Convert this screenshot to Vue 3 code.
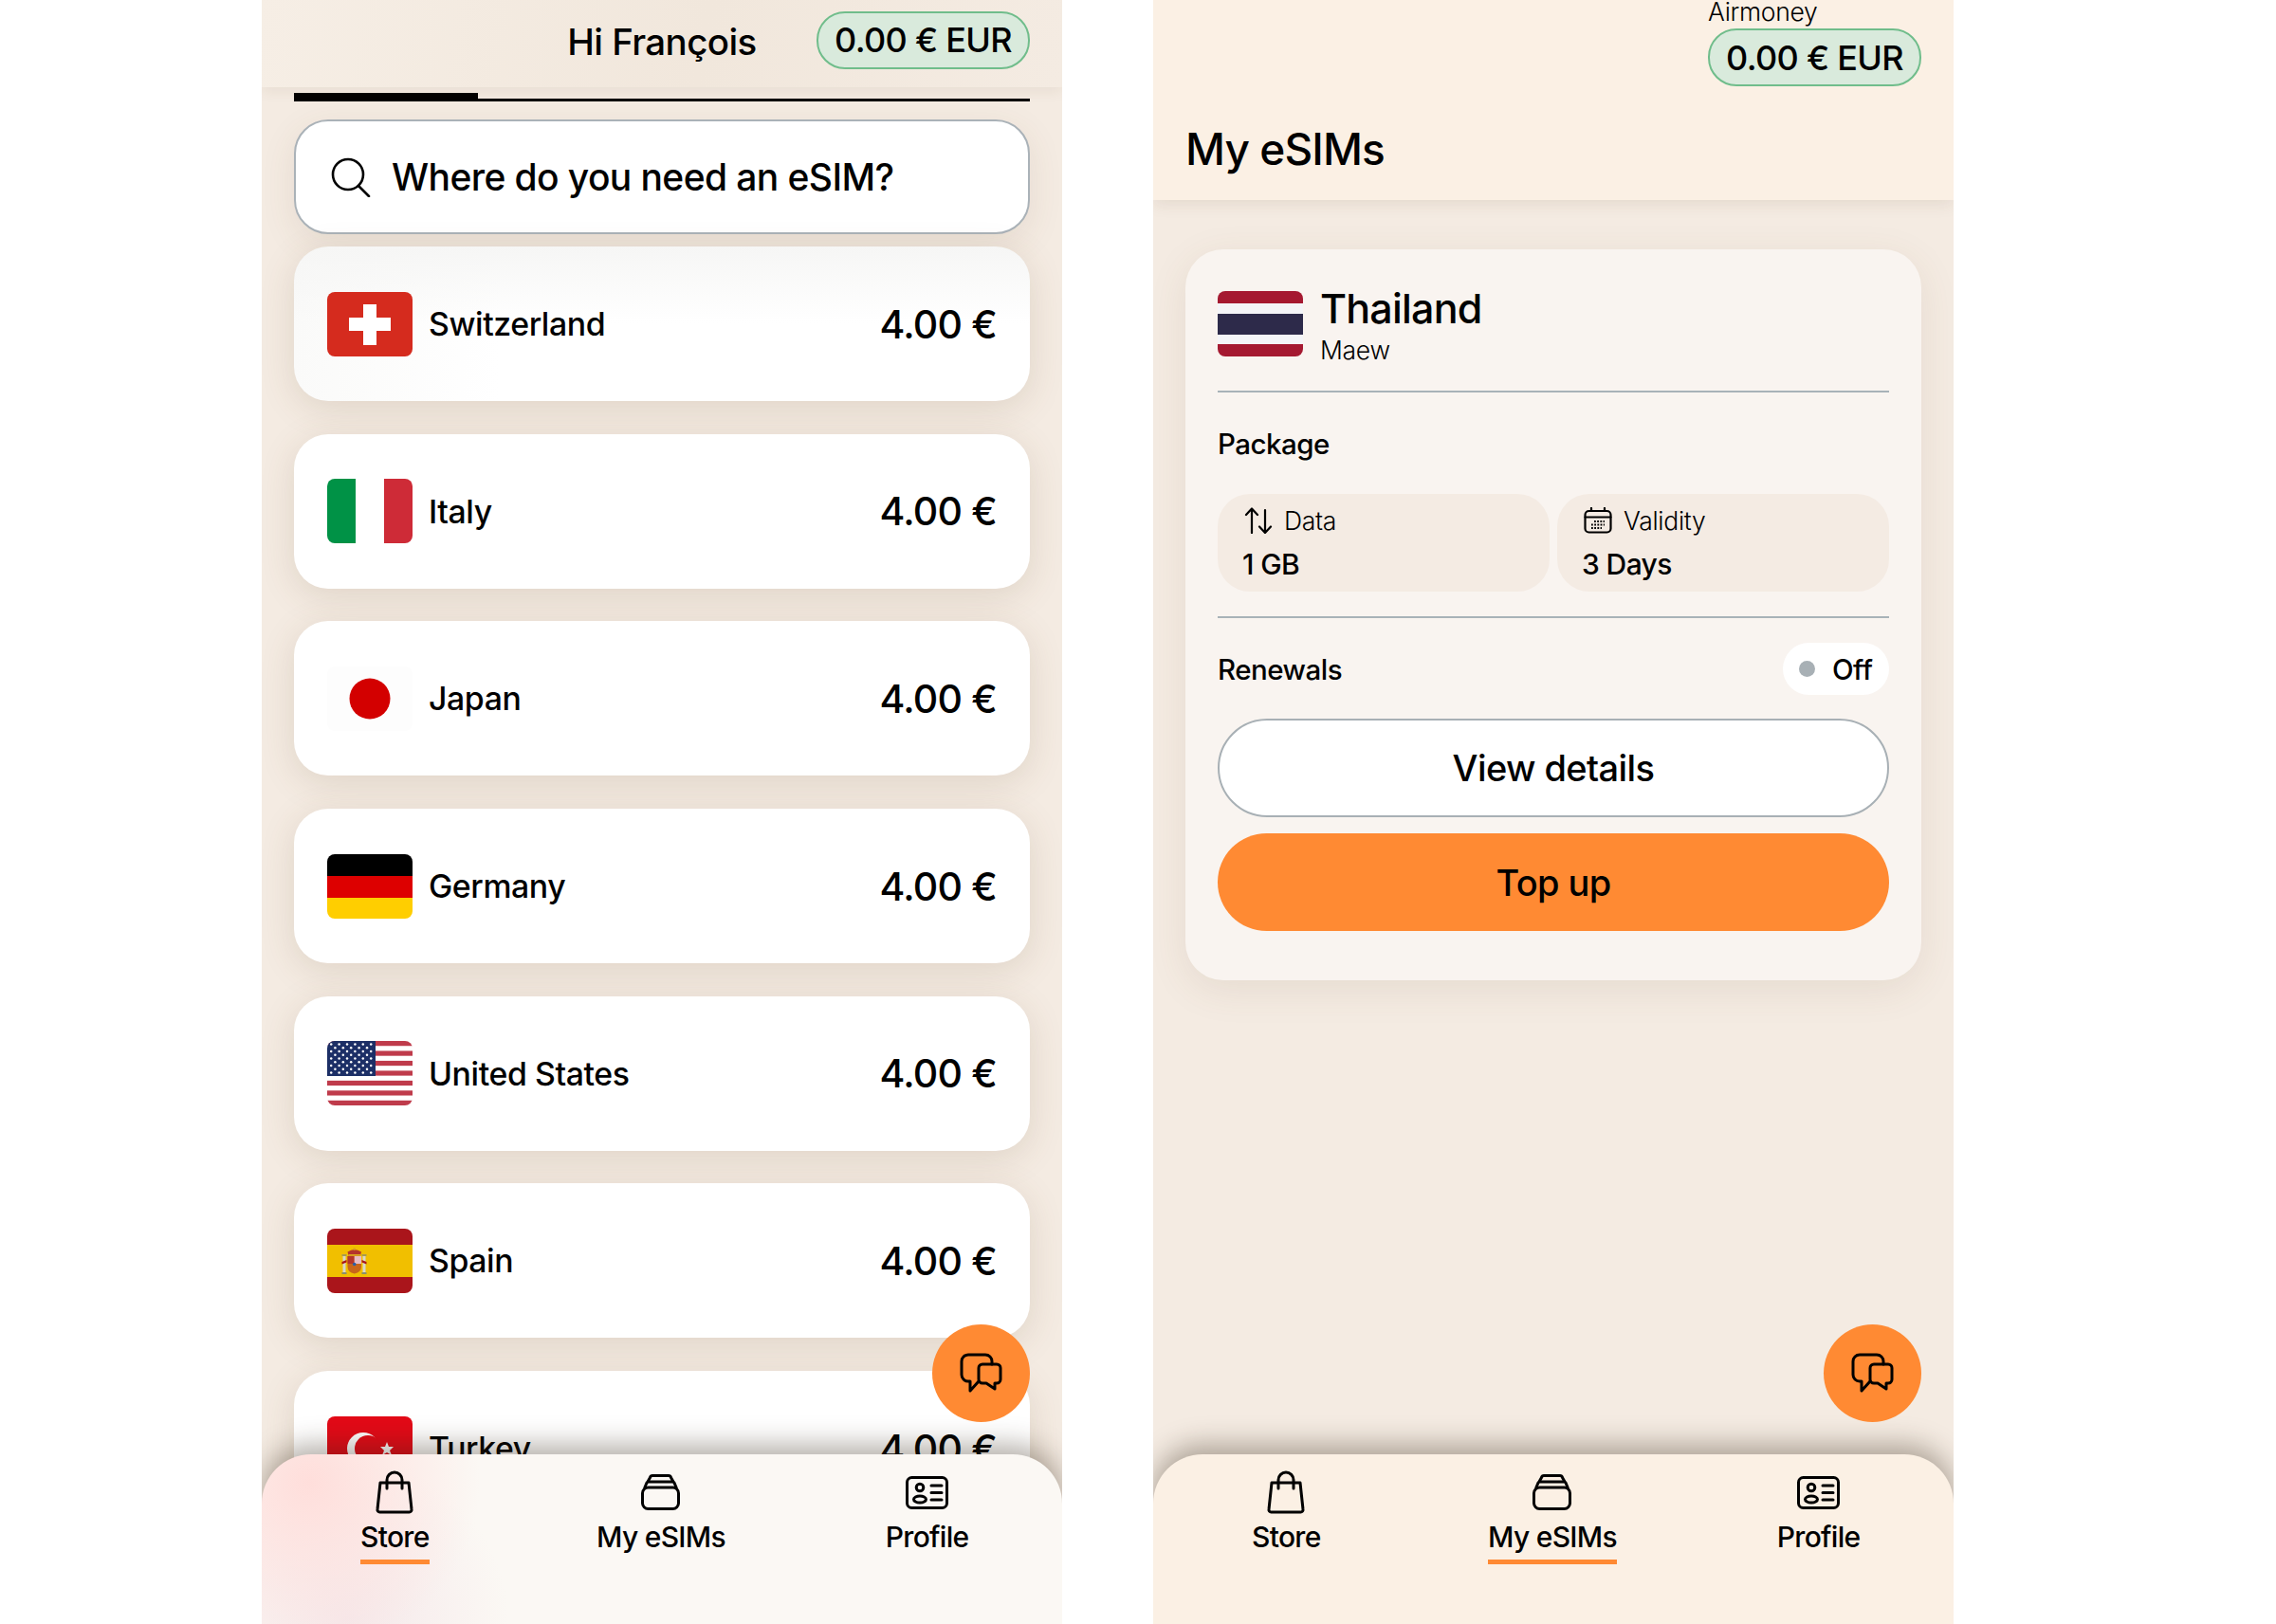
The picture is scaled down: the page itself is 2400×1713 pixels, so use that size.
<script setup>
const countries = [
  { name: 'Switzerland', flag: 'ch' },
  { name: 'Italy', flag: 'it' },
  { name: 'Japan', flag: 'jp' },
  { name: 'Germany', flag: 'de' },
  { name: 'United States', flag: 'us' },
  { name: 'Spain', flag: 'es' },
  { name: 'Turkey', flag: 'tr' },
]
const stripes = [0, 2, 4, 6, 8, 10, 12].map((i) => (i * 68) / 13)
const stars = []
for (let r = 0; r < 9; r++) {
  const n = r % 2 === 0 ? 6 : 5
  for (let c = 0; c < n; c++) {
    stars.push({ x: (r % 2 === 0 ? 4.2 : 8.4) + c * 8.4, y: 3.5 + r * 3.75 })
  }
}
const navs = ['Store', 'My eSIMs', 'Profile']
</script>

<template>
  <div class="page">
    <!-- Store screen -->
    <section class="screen store">
      <header class="hello">
        <h1 class="hi">Hi François</h1>
        <div class="pill hello-pill">0.00 € EUR</div>
      </header>
      <div class="tabs"><div class="tab-on"></div></div>
      <div class="search">
        <svg class="search-ic" viewBox="0 0 42 42" fill="none" stroke="#000" stroke-width="2.6" stroke-linecap="round">
          <circle cx="18" cy="18" r="16" />
          <path d="M29 30 L40 41" />
        </svg>
        <span>Where do you need an eSIM?</span>
      </div>
      <div class="list">
        <div v-for="(c, i) in countries" :key="c.name" class="row" :class="{ first: i === 0 }">
          <svg class="flag" viewBox="0 0 90 68">
            <template v-if="c.flag === 'ch'">
              <rect width="90" height="68" fill="#d52b1e" />
              <path d="M38 13 H52 V27 H67 V41 H52 V56 H38 V41 H23 V27 H38 Z" fill="#fff" />
            </template>
            <template v-else-if="c.flag === 'it'">
              <rect width="30" height="68" fill="#009246" />
              <rect x="30" width="30" height="68" fill="#fff" />
              <rect x="60" width="30" height="68" fill="#ce2b37" />
            </template>
            <template v-else-if="c.flag === 'jp'">
              <rect width="90" height="68" fill="#fdfdfd" />
              <circle cx="45" cy="34" r="21.5" fill="#d30000" />
            </template>
            <template v-else-if="c.flag === 'de'">
              <rect width="90" height="23" fill="#000" />
              <rect y="23" width="90" height="23" fill="#dd0000" />
              <rect y="46" width="90" height="22" fill="#ffce00" />
            </template>
            <template v-else-if="c.flag === 'us'">
              <rect width="90" height="68" fill="#fff" />
              <rect v-for="y in stripes" :key="y" :y="y" width="90" height="5.23" fill="#bf3b4b" />
              <rect width="51" height="37" fill="#1c2f66" />
              <circle v-for="(s, k) in stars" :key="k" :cx="s.x" :cy="s.y" r="1.25" fill="#fff" />
            </template>
            <template v-else-if="c.flag === 'es'">
              <rect width="90" height="68" fill="#aa151b" />
              <rect y="17" width="90" height="34" fill="#f1bf00" />
              <rect x="16.5" y="29" width="3" height="17" fill="#d8d8cc" />
              <rect x="37.5" y="29" width="3" height="17" fill="#d8d8cc" />
              <rect x="15.5" y="46" width="5" height="2" fill="#8a8f6a" />
              <rect x="36.5" y="46" width="5" height="2" fill="#8a8f6a" />
              <rect x="15.5" y="27" width="5" height="2" fill="#a89a50" />
              <rect x="36.5" y="27" width="5" height="2" fill="#a89a50" />
              <path d="M15.5 35 L20.5 33 V35.5 L15.5 37.5 Z M41.5 35 L36.5 33 V35.5 L41.5 37.5 Z" fill="#aa151b" />
              <path d="M21.5 29 H36 V40 Q36 46 28.7 47.5 Q21.5 46 21.5 40 Z" fill="#c8661b" />
              <rect x="21.5" y="29" width="7.2" height="8" fill="#b5352a" />
              <rect x="28.7" y="29" width="7.3" height="8" fill="#e8bcc4" />
              <circle cx="28.7" cy="37.5" r="1.8" fill="#2b5fa8" />
              <path d="M22.5 28.5 L21.5 24.5 Q25 22 28.7 22 Q32.5 22 36 24.5 L35 28.5 Z" fill="#b5352a" />
              <path d="M22.5 27 H35 V28.8 H22.5 Z" fill="#d9a520" />
              <circle cx="28.7" cy="21.5" r="1.3" fill="#d9a520" />
            </template>
            <template v-else-if="c.flag === 'tr'">
              <rect width="90" height="68" fill="#e30a17" />
              <circle cx="38" cy="34" r="17" fill="#fff" />
              <circle cx="43" cy="34" r="14" fill="#e30a17" />
              <path d="M63 27 L65 32 L70 32 L66 36 L68 41 L63 38 L58 41 L60 36 L56 32 L61 32 Z" fill="#fff" />
            </template>
          </svg>
          <span class="name">{{ c.name }}</span>
          <span class="price">4.00 €</span>
        </div>
      </div>
      <button class="fab" type="button" aria-label="Chat">
        <svg viewBox="0 0 46 42" fill="none" stroke="#000" stroke-width="3" stroke-linejoin="round" stroke-linecap="round">
          <path d="M34 12 V9 a7 7 0 0 0 -7 -7 H9 a7 7 0 0 0 -7 7 v14 a7 7 0 0 0 7 7 h2 v10 l9 -10" />
          <path d="M24 12 h15 a4 4 0 0 1 4 4 v12 a4 4 0 0 1 -4 4 h-2 v6 l-9 -6 h-4 a4 4 0 0 1 -4 -4 v-12 a4 4 0 0 1 4 -4z" />
        </svg>
      </button>
      <nav class="nav nav-store">
        <div v-for="(n, i) in navs" :key="n" class="nav-item">
          <div class="nav-ic">
            <svg v-if="i === 0" class="ic-bag" viewBox="0 0 40 46" fill="none" stroke="#000" stroke-width="3" stroke-linecap="round" stroke-linejoin="round">
              <path d="M5 13 H35 L38 41 a2.5 2.5 0 0 1 -2.5 3 H4.5 a2.5 2.5 0 0 1 -2.5 -3 Z" />
              <path d="M12 19 V10 a8 8 0 0 1 16 0 V19" />
            </svg>
            <svg v-else-if="i === 1" class="ic-sim" viewBox="0 0 41 38" fill="none" stroke="#000" stroke-width="3" stroke-linejoin="round">
              <rect x="1.5" y="14" width="38" height="22.5" rx="6" />
              <path d="M3.5 15 L6 9 Q6.5 8 8 8 H33 Q34.5 8 35 9 L37.5 15" />
              <path d="M7 8 L9.5 3.5 Q10 1.5 12 1.5 H29 Q31 1.5 31.5 3.5 L34 8" />
            </svg>
            <svg v-else class="ic-id" viewBox="0 0 45 35" fill="none" stroke="#000" stroke-width="3" stroke-linecap="round">
              <rect x="1.5" y="1.5" width="42" height="32" rx="5" />
              <circle cx="15" cy="12" r="3.8" />
              <ellipse cx="15" cy="24.5" rx="6.5" ry="3.6" />
              <path d="M27 10 H38 M27 17.5 H38 M27 25 H38" />
            </svg>
          </div>
          <span class="nav-label" :class="{ active: i === 0 }">{{ n }}</span>
        </div>
      </nav>
    </section>

    <!-- My eSIMs screen -->
    <section class="screen esims">
      <header class="top">
        <div class="wallet">
          <div class="wallet-name">Airmoney</div>
          <div class="pill">0.00 € EUR</div>
        </div>
        <h1 class="title">My eSIMs</h1>
      </header>
      <article class="card">
        <div class="card-head">
          <svg class="flag" viewBox="0 0 90 69">
            <rect width="90" height="69" fill="#a51931" />
            <rect y="13" width="90" height="43" fill="#f4f5f8" />
            <rect y="24" width="90" height="22" fill="#2d2a4a" />
          </svg>
          <div class="head-text">
            <div class="country">Thailand</div>
            <div class="carrier">Maew</div>
          </div>
        </div>
        <div class="rule"></div>
        <div class="section">Package</div>
        <div class="boxes">
          <div class="box">
            <div class="box-top">
              <svg class="box-ic" viewBox="0 0 30 28" fill="none" stroke="#000" stroke-width="2.2" stroke-linecap="round" stroke-linejoin="round">
                <path d="M8 27 V2 M2 8 L8 1.5 L14 8" />
                <path d="M22 3 V26.5 M16 20.5 L22 27 L28 20.5" />
              </svg>
              <span>Data</span>
            </div>
            <div class="box-val">1 GB</div>
          </div>
          <div class="box">
            <div class="box-top">
              <svg class="box-ic" viewBox="0 0 30 28" fill="none" stroke="#000" stroke-width="2.2" stroke-linecap="round">
                <rect x="1.5" y="4" width="27" height="22.5" rx="4" />
                <path d="M1.5 10.5 H28.5 M8 1 V4 M22 1 V4" />
                <path d="M11 15 H22 M8 18.5 H22 M8 22 H19" stroke-width="1.8" stroke-dasharray="1.8 1.4" stroke-linecap="butt" />
              </svg>
              <span>Validity</span>
            </div>
            <div class="box-val">3 Days</div>
          </div>
        </div>
        <div class="rule rule-two"></div>
        <div class="renew">
          <span class="section-inline">Renewals</span>
          <div class="toggle"><i class="dot"></i><span>Off</span></div>
        </div>
        <button class="btn btn-out" type="button">View details</button>
        <button class="btn btn-fill" type="button">Top up</button>
      </article>
      <button class="fab" type="button" aria-label="Chat">
        <svg viewBox="0 0 46 42" fill="none" stroke="#000" stroke-width="3" stroke-linejoin="round" stroke-linecap="round">
          <path d="M34 12 V9 a7 7 0 0 0 -7 -7 H9 a7 7 0 0 0 -7 7 v14 a7 7 0 0 0 7 7 h2 v10 l9 -10" />
          <path d="M24 12 h15 a4 4 0 0 1 4 4 v12 a4 4 0 0 1 -4 4 h-2 v6 l-9 -6 h-4 a4 4 0 0 1 -4 -4 v-12 a4 4 0 0 1 4 -4z" />
        </svg>
      </button>
      <nav class="nav">
        <div v-for="(n, i) in navs" :key="n" class="nav-item">
          <div class="nav-ic">
            <svg v-if="i === 0" class="ic-bag" viewBox="0 0 40 46" fill="none" stroke="#000" stroke-width="3" stroke-linecap="round" stroke-linejoin="round">
              <path d="M5 13 H35 L38 41 a2.5 2.5 0 0 1 -2.5 3 H4.5 a2.5 2.5 0 0 1 -2.5 -3 Z" />
              <path d="M12 19 V10 a8 8 0 0 1 16 0 V19" />
            </svg>
            <svg v-else-if="i === 1" class="ic-sim" viewBox="0 0 41 38" fill="none" stroke="#000" stroke-width="3" stroke-linejoin="round">
              <rect x="1.5" y="14" width="38" height="22.5" rx="6" />
              <path d="M3.5 15 L6 9 Q6.5 8 8 8 H33 Q34.5 8 35 9 L37.5 15" />
              <path d="M7 8 L9.5 3.5 Q10 1.5 12 1.5 H29 Q31 1.5 31.5 3.5 L34 8" />
            </svg>
            <svg v-else class="ic-id" viewBox="0 0 45 35" fill="none" stroke="#000" stroke-width="3" stroke-linecap="round">
              <rect x="1.5" y="1.5" width="42" height="32" rx="5" />
              <circle cx="15" cy="12" r="3.8" />
              <ellipse cx="15" cy="24.5" rx="6.5" ry="3.6" />
              <path d="M27 10 H38 M27 17.5 H38 M27 25 H38" />
            </svg>
          </div>
          <span class="nav-label" :class="{ active: i === 1 }">{{ n }}</span>
        </div>
      </nav>
    </section>
  </div>
</template>

<style>
html, body { background: #fff; }
</style>

<style scoped>
.page {
  width: 2400px;
  height: 1713px;
  box-sizing: border-box;
  padding-left: 276px;
  display: flex;
  gap: 96px;
  font-family: Inter, "Noto Sans", sans-serif;
  color: #000;
  overflow: hidden;
}
.screen {
  position: relative;
  width: 844px;
  height: 1713px;
  flex: none;
  overflow: hidden;
  background: #f4ebe2;
}
h1 { margin: 0; font-weight: 500; }

.hello {
  position: relative;
  z-index: 1;
  height: 92px;
  padding: 0 34px;
  display: flex;
  align-items: center;
  justify-content: flex-end;
  background: linear-gradient(100deg, #f6eee5 0%, #f1e7dc 55%, #f4ebe2 100%);
  box-shadow: 0 4px 14px rgba(90, 60, 30, .08);
}
.hi {
  position: absolute;
  left: 0;
  right: 0;
  top: 18px;
  text-align: center;
  font-size: 38.5px;
  line-height: 52px;
  letter-spacing: -.6px;
}
.pill {
  width: 225px;
  height: 61px;
  box-sizing: border-box;
  display: flex;
  align-items: center;
  justify-content: center;
  border: 2px solid #70bd8b;
  border-radius: 30px;
  background: #d9eadc;
  font-size: 36px;
  font-weight: 500;
  letter-spacing: -.7px;
  white-space: nowrap;
}
.hello-pill { margin-top: -8px; }
.tabs {
  position: relative;
  height: 9px;
  margin: 6px 34px 0;
  box-sizing: border-box;
  border-bottom: 3px solid #000;
}
.tab-on {
  width: 194px;
  height: 9px;
  background: #000;
}
.search {
  margin: 19px 34px 0;
  height: 121px;
  box-sizing: border-box;
  border: 2px solid #aab2b8;
  border-radius: 36px;
  background: #fff;
  display: flex;
  align-items: center;
  gap: 22px;
  padding-left: 37px;
  font-size: 39px;
  font-weight: 500;
  letter-spacing: -.6px;
  box-shadow: 0 10px 36px rgba(110, 80, 50, .1);
}
.search-ic { width: 42px; height: 42px; flex: none; }
.list {
  margin: 13px 34px 0;
  display: flex;
  flex-direction: column;
  gap: 34.7px;
}
.row {
  height: 163px;
  flex: none;
  box-sizing: border-box;
  padding: 0 35px;
  border-radius: 36px;
  background: #fff;
  display: flex;
  align-items: center;
  box-shadow: 0 8px 36px rgba(110, 80, 50, .15);
}
.row.first {
  background:
    linear-gradient(#f6f6f5 0%, rgba(255, 255, 255, 0) 50%),
    linear-gradient(90deg, #fafaf9 0%, rgba(255, 255, 255, 0) 28%),
    #fff;
}
.flag {
  width: 90px;
  height: 68px;
  flex: none;
  border-radius: 8px;
}
.name {
  margin-left: 17px;
  flex: 1;
  font-size: 33.8px;
  font-weight: 500;
  letter-spacing: -.4px;
}
.price {
  font-size: 41px;
  font-weight: 500;
  letter-spacing: -.8px;
}

.fab {
  position: absolute;
  z-index: 3;
  right: 34px;
  top: 1397px;
  width: 103px;
  height: 103px;
  padding: 0;
  border: 0;
  border-radius: 50%;
  background: #ff8a33;
  display: flex;
  align-items: center;
  justify-content: center;
}
.fab svg { width: 46px; height: 42px; margin-top: -2px; }

.nav {
  position: absolute;
  z-index: 2;
  left: 0;
  right: 0;
  top: 1534px;
  height: 179px;
  box-sizing: border-box;
  padding: 17px 2px 0 0;
  display: grid;
  grid-template-columns: repeat(3, 1fr);
  border-radius: 52px 52px 0 0;
  background: #fbf0e4;
  box-shadow: 0 -10px 28px rgba(50, 35, 20, .36);
}
.nav-store {
  background:
    radial-gradient(circle at 50px 30px, #ffdedb 0, rgba(255, 222, 219, 0) 180px),
    radial-gradient(circle at 90px 175px, #f5e8ea 0, rgba(245, 232, 234, 0) 170px),
    #fbf8f4;
}
.nav-item {
  display: flex;
  flex-direction: column;
  align-items: center;
}
.nav-ic {
  height: 46px;
  display: flex;
  align-items: center;
  justify-content: center;
}
.ic-bag { width: 40px; height: 46px; }
.ic-sim { width: 41px; height: 38px; }
.ic-id { width: 45px; height: 35px; }
.nav-label {
  margin-top: 5px;
  padding-bottom: 5px;
  font-size: 30px;
  line-height: 38px;
  font-weight: 500;
  letter-spacing: -.7px;
  border-bottom: 5px solid transparent;
}
.nav-label.active { border-bottom-color: #ff8a33; }

.top {
  position: relative;
  z-index: 1;
  height: 211px;
  box-sizing: border-box;
  padding: 0 34px;
  background: #fbf0e4;
  box-shadow: 0 4px 16px rgba(90, 60, 30, .1);
}
.wallet {
  width: 225px;
  margin-left: auto;
}
.wallet-name {
  height: 30px;
  font-size: 26.5px;
  line-height: 24px;
  font-weight: 300;
  letter-spacing: -.3px;
}
.title {
  margin-top: 33px;
  font-size: 46px;
  line-height: 66px;
  letter-spacing: -.9px;
}
.card {
  margin: 52px 34px 0;
  padding: 44px 34px 52px;
  border-radius: 40px;
  background: #f9f4f0;
  box-shadow: 0 10px 40px rgba(110, 80, 50, .1);
}
.card-head { display: flex; gap: 18px; height: 69px; }
.card-head .flag { height: 69px; }
.head-text { flex: 1; height: 69px; }
.country {
  margin-top: -4px;
  font-size: 43px;
  line-height: 44px;
  font-weight: 500;
  letter-spacing: -.8px;
}
.carrier {
  margin-top: 7px;
  font-size: 26.5px;
  line-height: 30px;
  font-weight: 300;
  letter-spacing: -.3px;
}
.rule { height: 2px; margin-top: 36px; background: #a8b2b8; }
.rule-two { margin-top: 26px; }
.section {
  margin-top: 36px;
  font-size: 29.5px;
  line-height: 36px;
  font-weight: 500;
  letter-spacing: -.5px;
}
.boxes {
  margin-top: 35px;
  display: grid;
  grid-template-columns: 1fr 1fr;
  gap: 8px;
}
.box {
  height: 103px;
  box-sizing: border-box;
  padding: 14px 26px 0;
  border-radius: 34px;
  background: #f4ebe3;
}
.box-top {
  height: 28px;
  display: flex;
  align-items: center;
  gap: 12px;
  font-size: 26.5px;
  font-weight: 300;
  letter-spacing: -.3px;
}
.box-ic { width: 30px; height: 28px; flex: none; margin-left: 2px; }
.box-val {
  margin-top: 14px;
  font-size: 30px;
  line-height: 36px;
  font-weight: 500;
  letter-spacing: -.6px;
}
.renew {
  margin-top: 26px;
  height: 55px;
  display: flex;
  align-items: center;
  justify-content: space-between;
}
.section-inline {
  font-size: 29.5px;
  font-weight: 500;
  letter-spacing: -.5px;
}
.toggle {
  width: 112px;
  height: 55px;
  box-sizing: border-box;
  padding-left: 17px;
  border-radius: 28px;
  background: #fff;
  display: flex;
  align-items: center;
  gap: 18px;
  font-size: 29.5px;
  font-weight: 500;
  letter-spacing: -.5px;
}
.dot {
  width: 17px;
  height: 17px;
  border-radius: 50%;
  background: #a8b0b5;
}
.btn {
  display: block;
  width: 100%;
  box-sizing: border-box;
  height: 104px;
  border-radius: 52px;
  font-family: inherit;
  font-size: 38px;
  font-weight: 500;
  letter-spacing: -.6px;
  color: #000;
}
.btn-out {
  margin-top: 25px;
  background: #fff;
  border: 2px solid #a8b0b5;
}
.btn-fill {
  margin-top: 17px;
  height: 103px;
  background: #ff8a33;
  border: 0;
}
</style>
